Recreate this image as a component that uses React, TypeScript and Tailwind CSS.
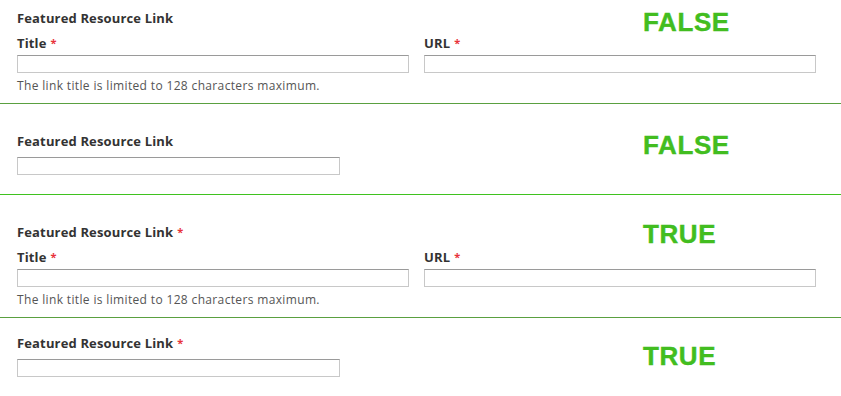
import React from 'react'

const font = { fontFamily: '"Open Sans", "DejaVu Sans", sans-serif' }

function Req() {
  return <span className="ml-[4px] text-[11px] align-[1px] text-[#e8323a]">*</span>
}

function Verdict({ text, top }: { text: string; top: string }) {
  return (
    <div
      className={`absolute left-[643px] ${top} text-[26px] leading-[25px] font-bold tracking-[0.6px] text-[#42bd20] [-webkit-text-stroke:0.4px_#42bd20]`}
      style={{ fontFamily: '"Liberation Sans", Arial, sans-serif' }}
    >
      {text}
    </div>
  )
}

function Input({ wide }: { wide?: boolean }) {
  return (
    <div
      className={`h-[18px] ${wide ? 'w-[392px]' : 'w-[323px]'} border border-[#c8c8c8] border-t-[#9a9a9a] bg-white`}
    />
  )
}

function LinkFields() {
  return (
    <div className="flex gap-[15px] mt-[7px]">
      <div className="flex flex-col">
        <label className="text-[13px] leading-[18px] font-bold tracking-[0.15px] text-[#333]">
          Title<Req />
        </label>
        <div className="mt-[3px]">
          <Input wide />
        </div>
        <p className="mt-[5px] text-[12px] leading-[16px] tracking-[0.35px] text-[#555]">
          The link title is limited to 128 characters maximum.
        </p>
      </div>
      <div className="flex flex-col">
        <label className="text-[13px] leading-[18px] font-bold tracking-[0.15px] text-[#333]">
          URL<Req />
        </label>
        <div className="mt-[3px]">
          <Input wide />
        </div>
      </div>
    </div>
  )
}

function Heading({ required }: { required?: boolean }) {
  return (
    <h3 className="text-[13px] leading-[18px] font-bold tracking-[0.15px] text-[#333]">
      Featured Resource Link{required && <Req />}
    </h3>
  )
}

export default function App() {
  return (
    <div className="w-[841px] h-[396px] bg-white overflow-hidden" style={font}>
      {/* required=false, title enabled */}
      <section className="relative h-[104px] px-[17px] pt-[9px] border-b border-[#5aa040]">
        <Heading />
        <LinkFields />
        <Verdict text="FALSE" top="top-[10px]" />
      </section>

      {/* required=false, url only */}
      <section className="relative h-[91px] px-[17px] pt-[28px] border-b border-[#3fc21f]">
        <Heading />
        <div className="mt-[7px]">
          <Input />
        </div>
        <Verdict text="FALSE" top="top-[29px]" />
      </section>

      {/* required=true, title enabled */}
      <section className="relative h-[123px] px-[17px] pt-[28px] border-b border-[#5aa040]">
        <Heading required />
        <LinkFields />
        <Verdict text="TRUE" top="top-[27px]" />
      </section>

      {/* required=true, url only */}
      <section className="relative px-[17px] pt-[16px]">
        <Heading required />
        <div className="mt-[7px]">
          <Input />
        </div>
        <Verdict text="TRUE" top="top-[26px]" />
      </section>
    </div>
  )
}
